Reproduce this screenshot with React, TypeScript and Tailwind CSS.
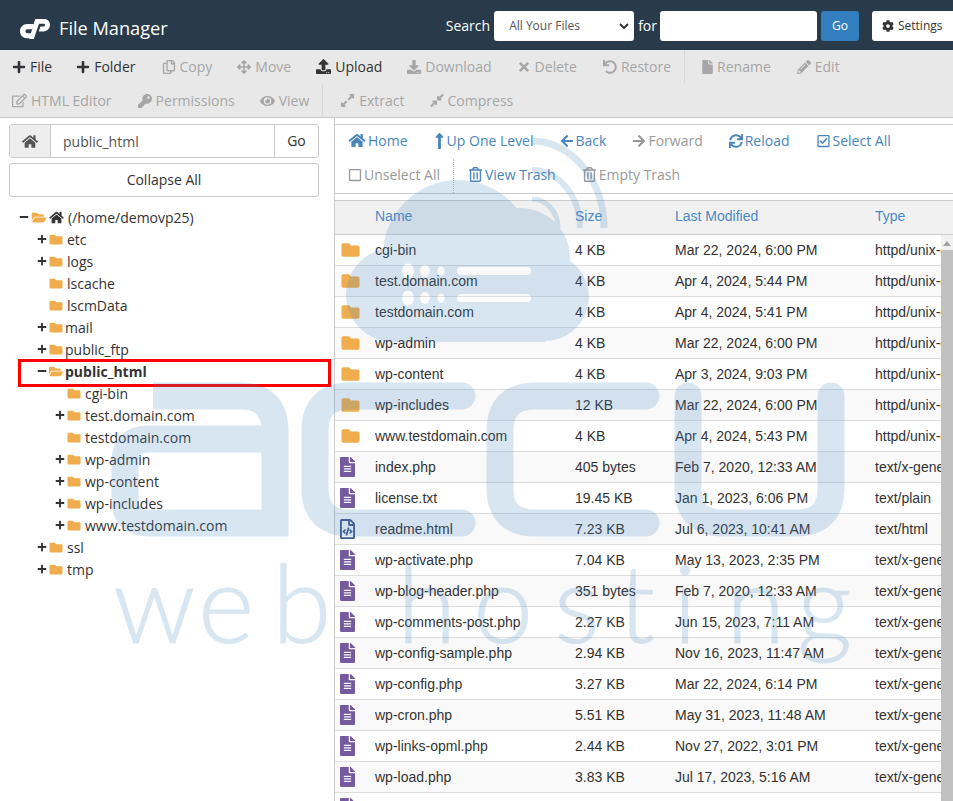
import type { ComponentType } from "react";
import {
  FaArrowLeft,
  FaArrowRight,
  FaArrowsAlt,
  FaCog,
  FaCompressAlt,
  FaDownload,
  FaExpandAlt,
  FaEye,
  FaFile,
  FaFileAlt,
  FaFolder,
  FaFolderOpen,
  FaHome,
  FaKey,
  FaLongArrowAltUp,
  FaMinus,
  FaPencilAlt,
  FaPlus,
  FaRegCheckSquare,
  FaRegCopy,
  FaRegEdit,
  FaRegFileCode,
  FaRegSquare,
  FaRegTrashAlt,
  FaSync,
  FaTimes,
  FaUndo,
  FaUpload,
} from "react-icons/fa";

type Icon = ComponentType<{ className?: string }>;
type Action = { label: string; icon: Icon; off?: boolean; sep?: boolean; size?: string; tail?: string };

const toolbarTop: Action[] = [
  { label: "File", icon: FaPlus, tail: "mr-[24px]" },
  { label: "Folder", icon: FaPlus },
  { label: "Copy", icon: FaRegCopy, off: true, tail: "mr-[25px]" },
  { label: "Move", icon: FaArrowsAlt, off: true, tail: "mr-[25px]" },
  { label: "Upload", icon: FaUpload, size: "h-[15px] w-[15px]", tail: "mr-[25px]" },
  { label: "Download", icon: FaDownload, off: true, tail: "mr-[25px]" },
  { label: "Delete", icon: FaTimes, off: true },
  { label: "Restore", icon: FaUndo, off: true },
  { label: "Rename", icon: FaFile, off: true, sep: true, size: "h-[14px] w-[11px]" },
  { label: "Edit", icon: FaPencilAlt, off: true },
];

const toolbarBottom: Action[] = [
  { label: "HTML Editor", icon: FaRegEdit, off: true, size: "h-[15px] w-[15px]" },
  { label: "Permissions", icon: FaKey, off: true, tail: "mr-[25px]" },
  { label: "View", icon: FaEye, off: true, size: "h-[14px] w-[15px]" },
  { label: "Extract", icon: FaExpandAlt, off: true, sep: true, size: "h-[15px] w-[15px]", tail: "mr-[25px]" },
  { label: "Compress", icon: FaCompressAlt, off: true, size: "h-[15px] w-[14px]" },
];

const navTop: Action[] = [
  { label: "Home", icon: FaHome, size: "h-[15px] w-[18px]" },
  { label: "Up One Level", icon: FaLongArrowAltUp, size: "h-[18px] w-[11px]" },
  { label: "Back", icon: FaArrowLeft },
  { label: "Forward", icon: FaArrowRight, off: true },
  { label: "Reload", icon: FaSync },
  { label: "Select All", icon: FaRegCheckSquare, size: "h-[14px] w-[15px]" },
];

const navBottom: Action[] = [
  { label: "Unselect All", icon: FaRegSquare, off: true, size: "h-[14px] w-[14px]" },
  { label: "View Trash", icon: FaRegTrashAlt, sep: true, size: "h-[15px] w-[15px]" },
  { label: "Empty Trash", icon: FaRegTrashAlt, off: true, size: "h-[15px] w-[15px]" },
];

const tree = [
  { name: "etc", level: 1, toggle: true, gap: "ml-[4px]" },
  { name: "logs", level: 1, toggle: true, gap: "ml-[4px]" },
  { name: "lscache", level: 1, gap: "ml-[4px]" },
  { name: "lscmData", level: 1, gap: "ml-[4px]" },
  { name: "mail", level: 1, toggle: true, gap: "ml-[2px]" },
  { name: "public_ftp", level: 1, toggle: true, gap: "ml-[2px]" },
  { name: "public_html", level: 1, open: true, gap: "ml-[2px]" },
  { name: "cgi-bin", level: 2, gap: "ml-[4px]" },
  { name: "test.domain.com", level: 2, toggle: true, gap: "ml-[4px]" },
  { name: "testdomain.com", level: 2, gap: "ml-[4px]" },
  { name: "wp-admin", level: 2, toggle: true, gap: "ml-[4px]" },
  { name: "wp-content", level: 2, toggle: true, gap: "ml-[4px]" },
  { name: "wp-includes", level: 2, toggle: true, gap: "ml-[4px]" },
  { name: "www.testdomain.com", level: 2, toggle: true, gap: "ml-[4px]" },
  { name: "ssl", level: 1, toggle: true, gap: "ml-[4px]" },
  { name: "tmp", level: 1, toggle: true, gap: "ml-[4px]" },
];

const files = [
  ["cgi-bin", "4 KB", "Mar 22, 2024, 6:00 PM", "httpd/unix-directory", "dir"],
  ["test.domain.com", "4 KB", "Apr 4, 2024, 5:44 PM", "httpd/unix-directory", "dir"],
  ["testdomain.com", "4 KB", "Apr 4, 2024, 5:41 PM", "httpd/unix-directory", "dir"],
  ["wp-admin", "4 KB", "Mar 22, 2024, 6:00 PM", "httpd/unix-directory", "dir"],
  ["wp-content", "4 KB", "Apr 3, 2024, 9:03 PM", "httpd/unix-directory", "dir"],
  ["wp-includes", "12 KB", "Mar 22, 2024, 6:00 PM", "httpd/unix-directory", "dir"],
  ["www.testdomain.com", "4 KB", "Apr 4, 2024, 5:43 PM", "httpd/unix-directory", "dir"],
  ["index.php", "405 bytes", "Feb 7, 2020, 12:33 AM", "text/x-generic", "text"],
  ["license.txt", "19.45 KB", "Jan 1, 2023, 6:06 PM", "text/plain", "text"],
  ["readme.html", "7.23 KB", "Jul 6, 2023, 10:41 AM", "text/html", "html"],
  ["wp-activate.php", "7.04 KB", "May 13, 2023, 2:35 PM", "text/x-generic", "text"],
  ["wp-blog-header.php", "351 bytes", "Feb 7, 2020, 12:33 AM", "text/x-generic", "text"],
  ["wp-comments-post.php", "2.27 KB", "Jun 15, 2023, 7:11 AM", "text/x-generic", "text"],
  ["wp-config-sample.php", "2.94 KB", "Nov 16, 2023, 11:47 AM", "text/x-generic", "text"],
  ["wp-config.php", "3.27 KB", "Mar 22, 2024, 6:14 PM", "text/x-generic", "text"],
  ["wp-cron.php", "5.51 KB", "May 31, 2023, 11:48 AM", "text/x-generic", "text"],
  ["wp-links-opml.php", "2.44 KB", "Nov 27, 2022, 3:01 PM", "text/x-generic", "text"],
  ["wp-load.php", "3.83 KB", "Jul 17, 2023, 5:16 AM", "text/x-generic", "text"],
  ["wp-login.php", "49.13 KB", "Jun 15, 2023, 7:11 AM", "text/x-generic", "text"],
];

const rowGrid = "grid grid-cols-[40px_200px_100px_200px_1fr] items-center";

function CpLogo() {
  return (
    <svg viewBox="20 18 30 20" className="mt-[5px] h-[20px] w-[30px] fill-white">
      <path d="M34 23H27.5C22.8 23 20 26.3 20 30.2C20 34.2 23 37.2 27 37.2H30.8L32.6 32.2H27.5C26.2 32.2 25.4 31.3 25.4 30.2C25.4 29.1 26.2 28.3 27.5 28.3H32.3Z" />
      <path d="M35.2 18H44C47.8 18 50 20.6 50 23.8C50 27.6 47 30.4 43.5 30.4H38.8L40.4 25.5H43.3C44.4 25.5 45 24.8 45 24C45 23.3 44.4 22.8 43.4 22.8H39L33.8 38H29.2Z" />
    </svg>
  );
}

function Toggle({ open }: { open?: boolean }) {
  const Mark = open ? FaMinus : FaPlus;
  return <Mark className="h-[10px] w-[10px] text-[#333]" />;
}

function ActionItem({ item, tone, gap }: { item: Action; tone: string; gap: string }) {
  const Glyph = item.icon;
  return (
    <span className={`flex shrink-0 items-center ${gap} ${tone}`}>
      <Glyph className={item.size ?? "h-[14px] w-[14px]"} />
      {item.label}
    </span>
  );
}

function ToolbarRow({ items }: { items: Action[] }) {
  return (
    <div className="flex h-[34px] items-stretch pl-[12px]">
      {items.map((item) => (
        <div key={item.label} className="flex items-stretch">
          {item.sep && <div className="-ml-[13px] mr-[17px] w-px bg-[#d8d8d8]" />}
          <div className={`flex items-center pb-[1px] ${item.tail ?? "mr-[26px]"}`}>
            <ActionItem item={item} gap="gap-[4px]" tone={item.off ? "text-[#a6a6a6]" : "text-[#333]"} />
          </div>
        </div>
      ))}
    </div>
  );
}

function NavRow({ items }: { items: Action[] }) {
  return (
    <div className="flex h-[34px] items-stretch">
      {items.map((item) => (
        <div key={item.label} className="flex items-stretch">
          {item.sep && <div className="-ml-[13px] mr-[14px] border-l border-dotted border-[#bbb]" />}
          <div className="mr-[26px] flex items-center pb-[3px]">
            <ActionItem item={item} gap="gap-[2px]" tone={item.off ? "text-[#999]" : "text-[#4a86bd]"} />
          </div>
        </div>
      ))}
    </div>
  );
}

function TreeRow({ node }: { node: (typeof tree)[number] }) {
  const FolderGlyph = node.open ? FaFolderOpen : FaFolder;
  return (
    <div className={`relative flex h-[22px] items-center ${node.level === 2 ? "pl-[55px]" : "pl-[37px]"}`}>
      <span className="flex w-[12px] justify-start">
        {node.toggle && <Toggle />}
        {node.open && <Toggle open />}
      </span>
      <FolderGlyph className="h-[13px] w-[14px] text-[#f0ad4e]" />
      <span className={`${node.gap} ${node.open ? "font-bold" : ""}`}>{node.name}</span>
      {node.open && (
        <div className="pointer-events-none absolute left-[18px] top-[-1px] h-[28px] w-[313px] border-[3px] border-[#f00]" />
      )}
    </div>
  );
}

function Watermark() {
  return (
    <svg
      viewBox="0 0 953 801"
      className="pointer-events-none absolute left-0 top-0 h-[801px] w-[953px] opacity-20"
    >
      <defs>
        <mask id="cloud-holes">
          <rect width="953" height="801" fill="white" />
          <g fill="black">
            <ellipse cx="408" cy="271" rx="6" ry="7.5" />
            <ellipse cx="425" cy="271" rx="5" ry="6" />
            <ellipse cx="441" cy="271" rx="3.5" ry="4.5" />
            <rect x="457" y="267" width="74" height="8" rx="4" />
            <ellipse cx="408" cy="298" rx="6" ry="7.5" />
            <ellipse cx="425" cy="298" rx="5" ry="6" />
            <ellipse cx="441" cy="298" rx="3.5" ry="4.5" />
            <rect x="457" y="294" width="74" height="8" rx="4" />
          </g>
        </mask>
      </defs>
      <g fill="#4187c3" mask="url(#cloud-holes)">
        <circle cx="458" cy="255" r="75" />
        <circle cx="520" cy="258" r="50" />
        <circle cx="393" cy="295" r="47" />
        <circle cx="545" cy="297" r="44" />
        <rect x="393" y="260" width="152" height="82" />
      </g>
      <g fill="none" stroke="#4187c3">
        <path d="M532 141A72 87 0 0 1 604 228" strokeWidth="7" />
        <path d="M532 170A48 58 0 0 1 580 228" strokeWidth="6" />
        <path d="M532 199A26 29 0 0 1 558 228" strokeWidth="5" />
      </g>
      <g fill="none" stroke="#4187c3" strokeWidth="27" strokeLinecap="round">
        <path d="M153 396H240Q275 396 275 431V523H148Q125 523 125 500V462Q125 439 148 439H275" strokeLinecap="butt" />
        <path d="M462 396H350Q315 396 315 431V488Q315 523 350 523H462" />
        <path d="M646 396H535Q500 396 500 431V488Q500 523 535 523H646" />
        <path d="M688 396V488Q688 523 723 523H796Q831 523 831 488V396" />
      </g>
      <text
        x="113 198 272 397 473 554 618 673 726 797"
        y="643"
        fill="#4187c3"
        stroke="#4187c3"
        strokeWidth="1"
        fontSize="108"
        fontWeight="300"
        fontFamily="Lato, sans-serif"
      >
        webhosting
      </text>
    </svg>
  );
}

export default function App() {
  return (
    <div className="relative flex h-[801px] w-[953px] flex-col overflow-hidden bg-white font-['Open_Sans',sans-serif] text-[14px] text-[#333]">
      {/* Header */}
      <header className="flex h-[50px] shrink-0 items-center bg-[#293a4a] pl-[20px] pt-[2px] text-white">
        <CpLogo />
        <span className="ml-[9px] mt-[6px] text-[18.2px]">File Manager</span>
        <span className="ml-auto mr-[4px] -mt-[2px] text-[14px]">Search</span>
        <div className="flex h-[30px] w-[140px] items-center justify-between rounded-[3px] bg-white pl-[15px] pr-[5px] text-[12px] text-[#555]">
          All Your Files
          <svg viewBox="0 0 10 6" className="h-[6px] w-[10px] fill-none stroke-[#333] stroke-[2]">
            <path d="M1 1l4 4 4-4" />
          </svg>
        </div>
        <span className="ml-[4px] mr-[3px] -mt-[2px] text-[14px]">for</span>
        <div className="h-[30px] w-[157px] rounded-[3px] bg-white" />
        <button className="ml-[4px] h-[30px] w-[38px] rounded-[3px] bg-[#337ebf] text-[12px]">Go</button>
        <button className="ml-[13px] flex h-[30px] w-[81px] items-center rounded-l-[3px] bg-white pl-[10px] text-[12px] text-[#333]">
          <FaCog className="mr-[4px] h-[12px] w-[12px]" />
          Settings
        </button>
      </header>

      {/* Actions */}
      <div className="h-[68px] shrink-0 border-b border-[#c8c8c8] bg-[#e8e8e8]">
        <ToolbarRow items={toolbarTop} />
        <ToolbarRow items={toolbarBottom} />
      </div>

      <div className="flex min-h-0 flex-1">
        {/* Tree */}
        <aside className="w-[334px] shrink-0 pl-[9px] pr-[15px] pt-[6px]">
          <div className="flex h-[34px] rounded-[3px] border border-[#ccc]">
            <span className="flex w-[41px] items-center justify-center border-r border-[#ccc] bg-[#eee] text-[#555]">
              <FaHome className="h-[15px] w-[16px]" />
            </span>
            <span className="flex flex-1 items-center pl-[12px] text-[#555]">public_html</span>
            <span className="flex w-[44px] items-center justify-center border-l border-[#ccc] pb-[2px]">Go</span>
          </div>
          <button className="mt-[5px] h-[34px] w-full rounded-[3px] border border-[#ccc] pb-[2px]">
            Collapse All
          </button>
          <div className="-ml-[9px] mt-[9px] pb-[6px]">
            <div className="flex h-[22px] items-center pl-[19px]">
              <span className="flex w-[12px]">
                <Toggle open />
              </span>
              <FaFolderOpen className="h-[13px] w-[16px] text-[#f0ad4e]" />
              <FaHome className="ml-[2px] h-[13px] w-[15px] text-[#333]" />
              <span className="ml-[4px]">(/home/demovp25)</span>
            </div>
            {tree.map((node) => (
              <TreeRow key={node.name} node={node} />
            ))}
          </div>
        </aside>

        {/* Files */}
        <main className="flex min-w-0 flex-1 flex-col border-l border-[#ccc] pt-[6px]">
          <div className="h-[70px] shrink-0 border-y border-[#ccc] pl-[13px]">
            <NavRow items={navTop} />
            <NavRow items={navBottom} />
          </div>
          <div className={`${rowGrid} mt-[6px] h-[35px] shrink-0 border-y border-[#ccc] bg-[#f1f1f1] pb-[2px] font-['Liberation_Sans',sans-serif] text-[#4a8ac6]`}>
            <span />
            <span>Name</span>
            <span>Size</span>
            <span>Last Modified</span>
            <span>Type</span>
          </div>
          <div className="flex min-h-0 flex-1">
            <div className="min-w-0 flex-1 overflow-hidden font-['Liberation_Sans',sans-serif]">
              {files.map(([name, size, modified, type, kind], index) => (
                <div
                  key={name}
                  className={`${rowGrid} h-[31px] border-b border-[#ddd] ${index % 2 === 1 ? "bg-[#f9f9f9]" : ""}`}
                >
                  <span className="pl-[5px]">
                    {kind === "dir" && <FaFolder className="h-[18px] w-[21px] text-[#f0ad4e]" />}
                    {kind === "text" && <FaFileAlt className="h-[20px] w-[15px] text-[#755aa0]" />}
                    {kind === "html" && <FaRegFileCode className="h-[20px] w-[15px] text-[#3f5a8c]" />}
                  </span>
                  <span className="truncate">{name}</span>
                  <span className="whitespace-nowrap">{size}</span>
                  <span className="whitespace-nowrap">{modified}</span>
                  <span className="overflow-hidden whitespace-nowrap">{type}</span>
                </div>
              ))}
            </div>
            <div className="flex w-[12px] shrink-0 flex-col items-center bg-[#f1f1f1]">
              <svg viewBox="0 0 8 5" className="mt-[6px] h-[5px] w-[8px] fill-[#a3a3a3]">
                <path d="M4 0l4 5H0z" />
              </svg>
              <div className="mt-[4px] w-full flex-1 bg-[#c1c1c1]" />
            </div>
          </div>
        </main>
      </div>

      <Watermark />
    </div>
  );
}
